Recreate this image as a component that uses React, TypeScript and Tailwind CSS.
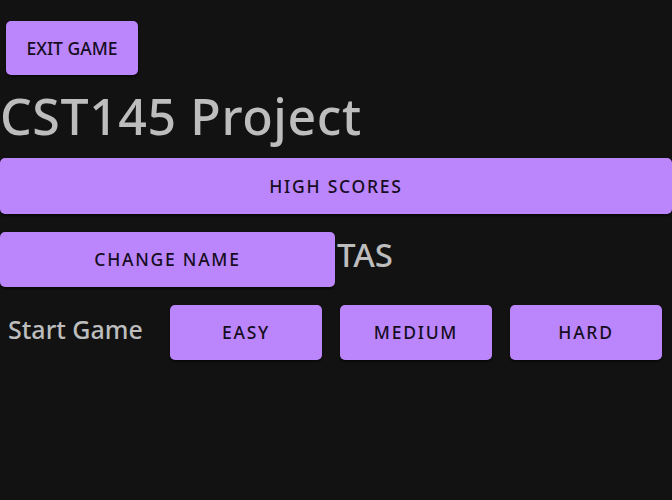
import React from "react";

const btn =
  "bg-[#bb86fc] text-[#160d1f] rounded-[5px] uppercase text-[17.5px] font-medium shadow-[0_2px_2px_rgba(0,0,0,0.5)] flex items-center justify-center";

export default function App() {
  return (
    <div
      className="w-full min-h-[500px] bg-[#121212] flex flex-col"
      style={{ fontFamily: '"Noto Sans", "Open Sans", sans-serif' }}
    >
      <div className="pt-[21px] pl-[6px]">
        <button className={`${btn} w-[132px] h-[54px]`}>Exit Game</button>
      </div>
      <h1 className="text-[50px] leading-[83px] h-[83px] text-[#bdbdbd] font-medium tracking-[0.6px]">
        CST145 Project
      </h1>
      <button className={`${btn} w-full h-[56px] tracking-[0.1em]`}>High Scores</button>
      <div className="flex items-center mt-[18px] h-[55px]">
        <button className={`${btn} w-[335px] h-[55px] tracking-[0.1em]`}>Change Name</button>
        <span className="text-[33px] text-[#bdbdbd] font-medium -mt-[10px] ml-[2px]">TAS</span>
      </div>
      <div className="flex items-center mt-[18px] h-[55px]">
        <span className="text-[25px] text-[#bdbdbd] font-medium pl-[8px] w-[170px] -mt-[5px]">Start Game</span>
        <div className="flex gap-[18px]">
          <button className={`${btn} w-[152px] h-[55px] tracking-[0.1em]`}>Easy</button>
          <button className={`${btn} w-[152px] h-[55px] tracking-[0.1em]`}>Medium</button>
          <button className={`${btn} w-[152px] h-[55px] tracking-[0.1em]`}>Hard</button>
        </div>
      </div>
    </div>
  );
}
